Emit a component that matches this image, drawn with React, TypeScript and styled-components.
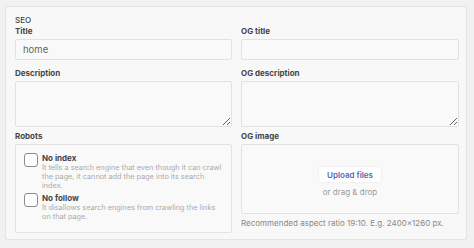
import React from 'react';
import styled, { createGlobalStyle } from 'styled-components';

const GlobalStyle = createGlobalStyle`
    html, body {
        margin: 0;
        padding: 0;
        background: #f1f1f1;
        font-family: Inter, "Noto Sans", sans-serif;
    }
    body {
        padding: 6px 7px 7px 5px;
    }
`;

const Card = styled.div`
    background: #f8f8f8;
    border: 1px solid #e4e4e4;
    border-radius: 2px;
    padding: 8px 7px 6px 9px;
`;

const Heading = styled.p`
    margin: 0;
    font-size: 8px;
    line-height: 11px;
    font-weight: 500;
    color: #444;
`;

const Grid = styled.div`
    display: grid;
    grid-template-columns: 217px 218px;
    column-gap: 9px;
`;

const Field = styled.div<{ $top?: number }>`
    display: flex;
    flex-direction: column;
    margin-top: ${p => p.$top ?? 0}px;
`;

const Label = styled.label`
    font-size: 8px;
    line-height: 10px;
    font-weight: 700;
    color: #444;
    margin-bottom: 3px;
`;

const Input = styled.input`
    box-sizing: border-box;
    height: 21px;
    width: 100%;
    margin: 0;
    padding: 0 7px;
    border: 1px solid #e2e2e2;
    border-radius: 2px;
    background: #f9f9f9;
    font-family: inherit;
    font-size: 9.5px;
    color: #666;
    outline: none;
`;

const TextArea = styled.textarea`
    box-sizing: border-box;
    display: block;
    height: 46px;
    width: 100%;
    margin: 0;
    padding: 4px 7px;
    border: 1px solid #e2e2e2;
    border-radius: 2px;
    background: #f9f9f9;
    font-family: inherit;
    font-size: 9.5px;
    resize: vertical;
    outline: none;
`;

const Panel = styled.div<{ $height: number }>`
    box-sizing: border-box;
    height: ${p => p.$height}px;
    border: 1px solid #e2e2e2;
    border-radius: 2px;
    background: #f9f9f9;
`;

const OptionList = styled(Panel)`
    display: flex;
    flex-direction: column;
    gap: 2px;
    padding: 7px 8px 0 8px;
`;

const Option = styled.div`
    display: flex;
    gap: 4px;
`;

const Box = styled.span`
    flex: none;
    box-sizing: border-box;
    width: 14px;
    height: 14px;
    margin-top: 1px;
    border: 1px solid #8a8a8a;
    border-radius: 3px;
    background: #fdfdfd;
`;

const OptionText = styled.div`
    display: flex;
    flex-direction: column;
`;

const OptionTitle = styled.span`
    font-size: 8px;
    line-height: 12px;
    font-weight: 700;
    color: #444;
`;

const OptionDesc = styled.span`
    font-size: 7.3px;
    line-height: 8.8px;
    color: #aaa;
`;

const Drop = styled(Panel)`
    display: flex;
    flex-direction: column;
    align-items: center;
    justify-content: center;
    gap: 5px;
    padding-top: 6px;
`;

const UploadButton = styled.button`
    width: 62px;
    height: 15px;
    padding: 0;
    border: none;
    border-radius: 3px;
    background: #ffffff;
    box-shadow: 0 0 2px rgba(0, 0, 0, 0.12);
    font-family: inherit;
    font-size: 8px;
    font-weight: 600;
    color: #5a63b5;
`;

const DropHint = styled.span`
    font-size: 8px;
    line-height: 10px;
    color: #9a9a9a;
`;

const Hint = styled.p`
    margin: 4px 0 0;
    font-size: 8px;
    line-height: 10px;
    color: #888;
`;

const App = () => {
    return (
        <>
            <GlobalStyle />
            <Card>
                <Heading>SEO</Heading>
                <Grid>
                    <Field>
                        <Label>Title</Label>
                        <Input defaultValue="home" />
                    </Field>
                    <Field>
                        <Label>OG title</Label>
                        <Input />
                    </Field>
                    <Field $top={8}>
                        <Label>Description</Label>
                        <TextArea />
                    </Field>
                    <Field $top={8}>
                        <Label>OG description</Label>
                        <TextArea />
                    </Field>
                    <Field $top={4}>
                        <Label>Robots</Label>
                        <OptionList $height={89}>
                            <Option>
                                <Box />
                                <OptionText>
                                    <OptionTitle>No index</OptionTitle>
                                    <OptionDesc>It tells a search engine that even though it can crawl the page, it cannot add the page into its search index.</OptionDesc>
                                </OptionText>
                            </Option>
                            <Option>
                                <Box />
                                <OptionText>
                                    <OptionTitle>No follow</OptionTitle>
                                    <OptionDesc>It disallows search engines from crawling the links on that page.</OptionDesc>
                                </OptionText>
                            </Option>
                        </OptionList>
                    </Field>
                    <Field $top={4}>
                        <Label>OG image</Label>
                        <Drop $height={70}>
                            <UploadButton>Upload files</UploadButton>
                            <DropHint>or drag &amp; drop</DropHint>
                        </Drop>
                        <Hint>Recommended aspect ratio 19:10. E.g. 2400×1260 px.</Hint>
                    </Field>
                </Grid>
            </Card>
        </>
    );
};

export default App;
